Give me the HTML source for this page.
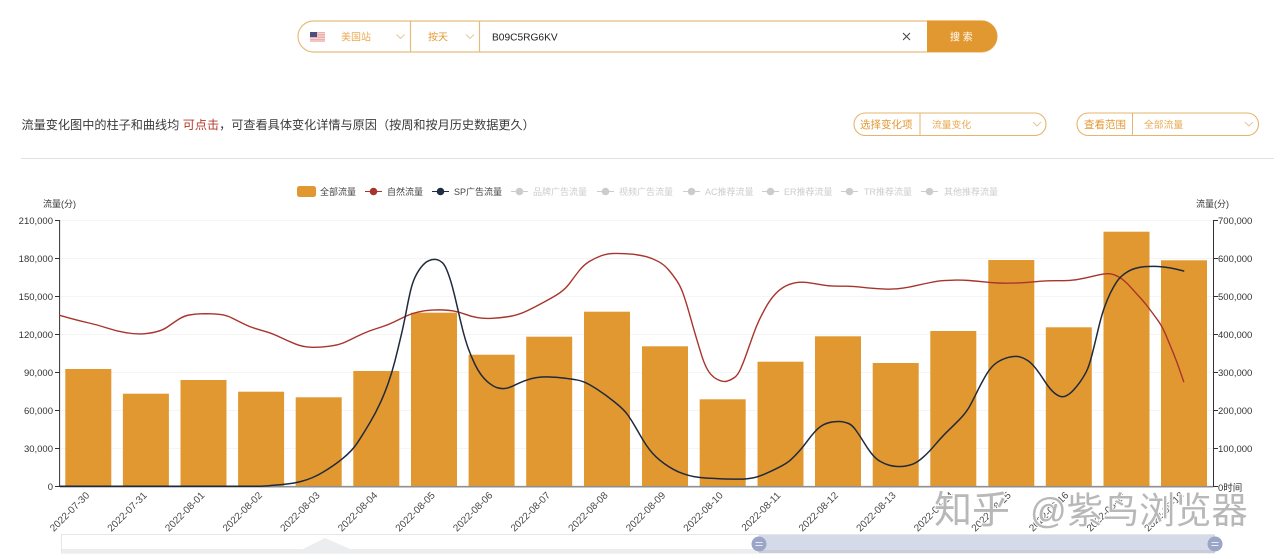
<!DOCTYPE html>
<html lang="zh">
<head>
<meta charset="utf-8">
<title>流量变化图</title>
<style>
html,body{margin:0;padding:0;background:#fff;width:1280px;height:559px;overflow:hidden}
svg{display:block;filter:blur(.3px)}
text{font-family:"Liberation Sans","Noto Sans CJK SC",sans-serif}
</style>
</head>
<body>
<svg xmlns="http://www.w3.org/2000/svg" width="1280" height="559" viewBox="0 0 1280 559">
<!-- search bar -->
<rect x="298" y="21" width="699" height="31" rx="15.5" fill="#fff" stroke="#e8bd7c" stroke-width="1.2"/>
<path d="M927 20.5H981.5A15.75 15.75 0 0 1 981.5 52H927Z" fill="#e29831"/>
<path d="M410.5 21V52M479.5 21V52" stroke="#e3bb80" stroke-width="1.2"/>
<rect x="310" y="32" width="15" height="10" fill="#eeb0ae"/>
<path d="M310 33.5H325M310 36H325M310 38.5H325M310 41H325" stroke="#f6e4e2" stroke-width="0.8"/>
<rect x="310" y="32" width="7" height="5" fill="#4a4f80"/>
<text x="341" y="40.5" font-size="10" fill="#e8ab55">美国站</text>
<path d="M396.500 34.500L400.500 38.500L404.500 34.500" fill="none" stroke="#e5c79a" stroke-width="1"/>
<text x="428" y="40.500" font-size="10" fill="#e29831">按天</text>
<path d="M466 34.500L470 38.500L474 34.500" fill="none" stroke="#e5c79a" stroke-width="1"/>
<text x="492" y="40.500" font-size="10.200" fill="#222">B09C5RG6KV</text>
<path d="M903 33L910 40M910 33L903 40" stroke="#444" stroke-width="1"/>
<text x="950" y="40.500" font-size="10" fill="#fff" xml:space="preserve">搜 索</text>

<!-- heading -->
<text x="21.500" y="129" font-size="12.150" fill="#3a3a3a" xml:space="preserve">流量变化图中的柱子和曲线均 <tspan fill="#b5392c">可点击</tspan>，可查看具体变化详情与原因（按周和按月历史数据更久）</text>

<!-- selects -->
<rect x="854" y="113" width="192" height="22.500" rx="11.200" fill="#fff" stroke="#e5b46d" stroke-width="1.100"/>
<path d="M920 113V135.500" stroke="#e5b46d" stroke-width="1"/>
<text x="860" y="128" font-size="10.500" fill="#e29831">选择变化项</text>
<text x="932" y="128" font-size="9.800" fill="#e8ab55">流量变化</text>
<path d="M1033 122L1037 126L1041 122" fill="none" stroke="#e5c79a" stroke-width="1"/>
<rect x="1077" y="113" width="181.500" height="22.500" rx="11.200" fill="#fff" stroke="#e5b46d" stroke-width="1.100"/>
<path d="M1132.500 113V135.500" stroke="#e5b46d" stroke-width="1"/>
<text x="1084" y="128" font-size="10.500" fill="#e29831">查看范围</text>
<text x="1144" y="128" font-size="9.800" fill="#e8ab55">全部流量</text>
<path d="M1245 122L1249 126L1253 122" fill="none" stroke="#e5c79a" stroke-width="1"/>

<path d="M21 158.500H1274" stroke="#e2e2e2" stroke-width="1"/>

<!-- legend -->
<rect x="297" y="186" width="19" height="11" rx="2.500" fill="#e29831"/>
<text x="320" y="195" font-size="9" fill="#444">全部流量</text>
<path d="M365 191.500H382" stroke="#a8352d" stroke-width="1"/><circle cx="373.500" cy="191.500" r="3.800" fill="#a8352d"/>
<text x="387" y="195" font-size="9" fill="#444">自然流量</text>
<path d="M432 191.500H449" stroke="#1f2d45" stroke-width="1"/><circle cx="440.500" cy="191.500" r="3.800" fill="#1f2d45"/>
<text x="454" y="195" font-size="9" fill="#444">SP广告流量</text>
<g stroke="#ccc" stroke-width="1">
<path d="M511 191.500H528M597 191.500H614M683 191.500H700M762 191.500H779M841 191.500H858M921 191.500H938"/>
</g>
<g fill="#ccc">
<circle cx="519.500" cy="191.500" r="3.800"/><circle cx="605.500" cy="191.500" r="3.800"/><circle cx="691.500" cy="191.500" r="3.800"/><circle cx="770.500" cy="191.500" r="3.800"/><circle cx="849.500" cy="191.500" r="3.800"/><circle cx="929.500" cy="191.500" r="3.800"/>
</g>
<g font-size="9" fill="#ccc">
<text x="533" y="195">品牌广告流量</text>
<text x="619" y="195">视频广告流量</text>
<text x="705" y="195">AC推荐流量</text>
<text x="784" y="195">ER推荐流量</text>
<text x="864" y="195">TR推荐流量</text>
<text x="944" y="195">其他推荐流量</text>
</g>

<text x="43" y="207" font-size="9" fill="#333">流量(分)</text>
<text x="1196" y="207" font-size="9" fill="#333">流量(分)</text>

<!-- gridlines -->
<path d="M60 220.500H1213M60 258.500H1213M60 296.500H1213M60 334.500H1213M60 372.500H1213M60 410.500H1213M60 448.500H1213" stroke="#f5f5f5" stroke-width="1"/>

<!-- bars -->
<g fill="#e29831">
<rect x="65.300" y="369" width="46" height="117"/>
<rect x="122.900" y="393.700" width="46" height="92.300"/>
<rect x="180.500" y="380" width="46" height="106"/>
<rect x="238.100" y="391.700" width="46" height="94.300"/>
<rect x="295.700" y="397.300" width="46" height="88.700"/>
<rect x="353.300" y="371" width="46" height="115"/>
<rect x="411" y="312.700" width="46" height="173.300"/>
<rect x="468.600" y="354.700" width="46" height="131.300"/>
<rect x="526.200" y="336.700" width="46" height="149.300"/>
<rect x="584" y="311.700" width="46" height="174.300"/>
<rect x="642" y="346.300" width="46" height="139.700"/>
<rect x="699.700" y="399.300" width="46" height="86.700"/>
<rect x="757.500" y="361.700" width="46" height="124.300"/>
<rect x="815" y="336.300" width="46" height="149.700"/>
<rect x="872.700" y="363" width="46" height="123"/>
<rect x="930.300" y="331" width="46" height="155"/>
<rect x="988.300" y="260" width="46" height="226"/>
<rect x="1045.800" y="327.300" width="46" height="158.700"/>
<rect x="1103.500" y="231.700" width="46" height="254.300"/>
<rect x="1161" y="260.300" width="46" height="225.700"/>
</g>

<!-- axes -->
<path d="M60 486.700H1213.500" stroke="#8f8f8f" stroke-width="1.600"/>
<path d="M59.600 220V487" stroke="#333" stroke-width="1"/>
<path d="M1213.500 220V487" stroke="#333" stroke-width="1"/>
<path d="M55 220.500H60M55 258.500H60M55 296.500H60M55 334.500H60M55 372.500H60M55 410.500H60M55 448.500H60M55 486.500H60M1213 220.500H1218M1213 258.500H1218M1213 296.500H1218M1213 334.500H1218M1213 372.500H1218M1213 410.500H1218M1213 448.500H1218M1213 486.500H1218" stroke="#333" stroke-width="1"/>

<!-- curves -->
<path fill="none" stroke="#a8352d" stroke-width="1.400" stroke-linecap="round" d="M59.6 315.3L69.8 318.2Q80 321 89 323Q98 325 107 328Q116 331 125.3 332.6Q134.7 334.3 142.3 333.9Q150 333.5 156.6 331.7Q163.3 330 168.1 326.5Q173 323 178.3 319.5Q183.7 316 189.3 315Q195 314 200.5 313.8Q206 313.7 211 313.8Q216 314 221.2 314.6Q226.5 315.3 232.2 318.1Q238 321 243.5 323.8Q249 326.7 255.5 328.6Q262 330.5 267.7 332.2Q273.5 334 280.7 337.5Q288 341 295 343.8Q302 346.7 310.2 347.2Q318.4 347.7 328.6 346.3Q338.8 345 344.9 342.2Q351 339.5 357.1 336.4Q363.3 333.3 369.1 331.1Q375 329 381.4 327Q387.8 325 393.9 322Q400 319 406 316.1Q412 313.3 418.5 311.9Q425 310.5 431.9 310.1Q438.8 309.7 443.9 310Q449 310.3 454 311.1Q459 312 465 314.2Q471 316.5 477.3 317.6Q483.7 318.7 491.8 318.3Q500 318 509.2 316.5Q518.4 315 526.7 311Q535 307 543 302.6Q551 298.3 555.5 295.6Q560 293 563.6 289.8Q567.3 286.7 571.1 281.3Q575 276 579.3 270.5Q583.7 265 589.3 261.5Q595 258 601.5 255.6Q608 253.3 616.5 253.4Q625 253.5 632.5 254.2Q640 255 646.5 256.7Q653 258.5 658.7 261.7Q664.5 265 668.7 270Q673 275 676.9 280.8Q680.8 286.7 683.9 295.8Q687 305 690 315.8Q693 326.7 696 336.8Q699 347 702.1 356.8Q705.3 366.7 709.1 372.1Q713 377.5 718.3 379.9Q723.7 382.3 727.3 381.1Q731 380 734.5 377.5Q738 375 741 368Q744 361 747.1 352.1Q750.2 343.3 753.1 335.1Q756 327 759.2 320.1Q762.4 313.3 766.2 306.6Q770 300 774.4 295Q778.8 290 783.9 287Q789 284 795.1 282.8Q801.2 281.7 807.6 282.6Q814 283.5 820.9 284.7Q827.8 286 833.9 286.1Q840 286.2 846.1 286.2Q852.2 286.3 860.1 287.1Q868 288 876.4 288.6Q884.9 289.3 890.9 289.1Q897 289 903.2 288.1Q909.4 287.3 916.2 285.6Q923 284 930.5 282.5Q938 281 944 280.6Q950 280.3 956.2 280.1Q962.4 280 969.2 280.5Q976 281 983.5 281.8Q991 282.7 998 283Q1005 283.3 1012.3 283.1Q1019.6 283 1026.8 282.4Q1034 281.8 1041.1 281.2Q1048.2 280.7 1055.1 280.7Q1062 280.8 1069.3 280.4Q1076.7 280 1084.3 278.2Q1092 276.5 1099.6 274.7Q1107.3 273 1112.1 274.2Q1117 275.5 1121.3 278.6Q1125.7 281.7 1130.3 286.8Q1135 292 1140 297.5Q1145 303 1149.5 309Q1154 315 1158.2 320.8Q1162.4 326.7 1166.2 335.8Q1170 345 1173.5 353.5Q1177 362 1180.3 371.8L1183.7 381.7"/>
<path fill="none" stroke="#1f2a3d" stroke-width="1.500" stroke-linecap="round" d="M59.6 486.3L261 486.3Q277.6 485 285.7 484.1Q293.9 483.3 300.4 481.6Q307 480 312.7 477.5Q318.4 475 323.7 471.7Q329 468.5 333.9 465.1Q338.8 461.7 342.9 458.3Q347 455 351 450.8Q355 446.7 360 438.8Q365 431 370.2 422.1Q375.5 413.3 379.7 404.1Q384 395 387.9 384.1Q391.8 373.3 394.9 361.1Q398 349 401 336.1Q404 323.3 406 312.6Q408 302 410.1 292.6Q412.2 283.3 415.1 277.1Q418 271 421.2 267.1Q424.5 263.3 426.7 261.8Q429 260.3 431.8 259.6Q434.7 259 437.3 259.7Q440 260.5 442.4 262.7Q444.9 265 447.4 271.5Q450 278 452.5 287.3Q455 296.7 457.5 307.8Q460 319 462.6 329.5Q465.3 340 468.1 348Q471 356 474.3 363Q477.6 370 481.3 375Q485 380 489.4 383.3Q493.9 386.7 496.9 387.6Q500 388.5 503 388.6Q506 388.7 509 387.6Q512 386.5 515.2 384.9Q518.4 383.3 524.2 380.9Q530 378.5 536.4 377.6Q542.9 376.7 549.9 377Q557 377.3 564.2 378.1Q571.4 379 575.7 379.7Q580 380.5 583.9 381.9Q587.8 383.3 596.9 389.1Q606 395 615.2 402.5Q624.5 410 628.2 415.5Q632 421 636 428Q640 435 643 440Q646 445 649.1 449.1Q652.2 453.3 656.1 456.9Q660 460.5 664.3 463.6Q668.6 466.7 673.3 469.3Q678 472 683.5 473.8Q689 475.7 694 476.6Q699 477.5 704.2 477.9Q709.4 478.3 717.2 478.6Q725 479 733.5 479.1Q742 479.3 746 478.9Q750 478.5 754.2 477.6Q758.4 476.7 765.2 473.8Q772 471 779.5 467.1Q787 463.3 791 459.6Q795 456 799.1 451.3Q803.3 446.7 807.1 441.3Q811 436 815.3 431.3Q819.6 426.7 823.8 424.6Q828 422.5 833 421.9Q838 421.3 841.5 421.6Q845 422 848.6 423.5Q852.2 425 856.1 430.5Q860 436 864.3 443Q868.6 450 872.3 454.5Q876 459 880.4 461.5Q884.9 464 888.9 465.1Q893 466.3 897.1 466.5Q901.2 466.7 905.1 466.1Q909 465.5 913.3 463.9Q917.6 462.3 923.3 457.1Q929 452 935.5 444.3Q942 436.7 947 431.8Q952 427 957.2 421.8Q962.4 416.7 965.7 412.3Q969 408 971.8 402.3Q974.7 396.7 978.3 389.3Q982 382 986.5 374.3Q991 366.7 996.5 362.8Q1002 359 1008.7 357.3Q1015.5 355.7 1019.7 356.8Q1024 358 1027.9 360.6Q1031.8 363.3 1035.9 368.6Q1040 374 1044.1 380.3Q1048.2 386.7 1051.6 390.3Q1055 394 1058.7 395.8Q1062.4 397.7 1066.2 395.8Q1070 394 1073.3 390.3Q1076.7 386.7 1079.8 382.3Q1083 378 1086 372.3Q1089 366.7 1092 354.8Q1095 343 1098.1 329.8Q1101.2 316.7 1104.1 308.3Q1107 300 1110.2 293.3Q1113.5 286.7 1116.7 281.8Q1120 277 1124.9 273.5Q1129.8 270 1134.9 268.5Q1140 267 1145.1 266.6Q1150.2 266.3 1154.1 266.4Q1158 266.5 1162.2 266.9Q1166.5 267.3 1170.7 268Q1175 268.8 1183.7 271"/>

<!-- y labels -->
<g font-size="9.500" fill="#333" text-anchor="end">
<text x="53" y="224">210,000</text>
<text x="53" y="262">180,000</text>
<text x="53" y="300">150,000</text>
<text x="53" y="338">120,000</text>
<text x="53" y="376">90,000</text>
<text x="53" y="414">60,000</text>
<text x="53" y="452">30,000</text>
<text x="53" y="490">0</text>
</g>
<g font-size="9.500" fill="#333">
<text x="1218" y="224">700,000</text>
<text x="1218" y="262">600,000</text>
<text x="1218" y="300">500,000</text>
<text x="1218" y="338">400,000</text>
<text x="1218" y="376">300,000</text>
<text x="1218" y="414">200,000</text>
<text x="1218" y="452">100,000</text>
<text x="1218" y="491">0时间</text>
</g>

<!-- x labels -->
<g font-size="10" fill="#4a4a4a" text-anchor="end">
<text transform="translate(90,496) rotate(-45)">2022-07-30</text>
<text transform="translate(147.600,496) rotate(-45)">2022-07-31</text>
<text transform="translate(205.200,496) rotate(-45)">2022-08-01</text>
<text transform="translate(262.800,496) rotate(-45)">2022-08-02</text>
<text transform="translate(320.400,496) rotate(-45)">2022-08-03</text>
<text transform="translate(378,496) rotate(-45)">2022-08-04</text>
<text transform="translate(435.600,496) rotate(-45)">2022-08-05</text>
<text transform="translate(493.200,496) rotate(-45)">2022-08-06</text>
<text transform="translate(550.800,496) rotate(-45)">2022-08-07</text>
<text transform="translate(608.400,496) rotate(-45)">2022-08-08</text>
<text transform="translate(666,496) rotate(-45)">2022-08-09</text>
<text transform="translate(723.600,496) rotate(-45)">2022-08-10</text>
<text transform="translate(781.200,496) rotate(-45)">2022-08-11</text>
<text transform="translate(838.800,496) rotate(-45)">2022-08-12</text>
<text transform="translate(896.400,496) rotate(-45)">2022-08-13</text>
<text transform="translate(954,496) rotate(-45)">2022-08-14</text>
<text transform="translate(1011.600,496) rotate(-45)">2022-08-15</text>
<text transform="translate(1069.200,496) rotate(-45)">2022-08-16</text>
<text transform="translate(1126.800,496) rotate(-45)">2022-08-17</text>
<text transform="translate(1184.400,496) rotate(-45)">2022-08-18</text>
</g>

<!-- watermark -->
<text x="934" y="523" font-size="38" fill="#b8b8b8" stroke="#fff" stroke-width="2" paint-order="stroke" xml:space="preserve">知乎</text>
<text x="1030" y="523" font-size="36.200" fill="#b8b8b8" stroke="#fff" stroke-width="2" paint-order="stroke">@紫鸟浏览器</text>

<!-- data zoom -->
<rect x="61.500" y="534.500" width="1153" height="18.500" fill="#fff" stroke="#e6e6e6" stroke-width="1"/>
<path d="M62 549H303L325 538L350 549H1214V553H62Z" fill="#ecedee"/>
<rect x="759" y="535" width="456" height="18" fill="#d5dae8"/>
<path d="M759 550H1215V553H759Z" fill="#c8cdd8"/>
<ellipse cx="759" cy="544" rx="7.500" ry="7.500" fill="#9aa5c8"/>
<ellipse cx="1215" cy="544" rx="7.500" ry="7.500" fill="#9aa5c8"/>
<path d="M755.500 542.500H762.500M755.500 545.500H762.500M1211.500 542.500H1218.500M1211.500 545.500H1218.500" stroke="#e8ebf3" stroke-width="1"/>
</svg>
</body>
</html>
